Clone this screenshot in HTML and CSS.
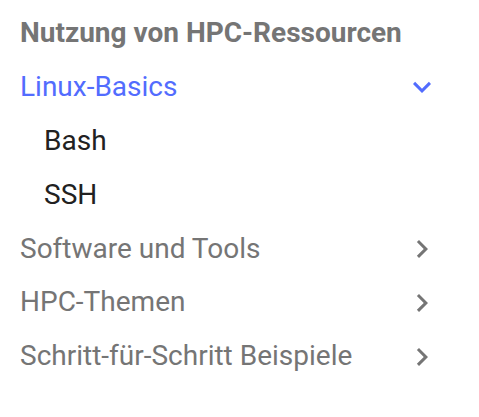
FILE: index.html
```html
<!DOCTYPE html>
<html lang="de">
<head>
<meta charset="utf-8">
<link rel="stylesheet" href="styles.css">
</head>
<body>
<nav class="nav">
  <div class="nav-title">Nutzung von HPC-Ressourcen</div>
  <ul class="nav-list">
    <li class="nav-item">
      <a class="nav-link active">Linux-Basics
        <svg class="icon" viewBox="0 0 24 24"><path d="M7.41 8.58 12 13.17l4.59-4.59L18 10l-6 6-6-6z"/></svg>
      </a>
      <ul class="nav-list nested">
        <li class="nav-item"><a class="nav-link sub">Bash</a></li>
        <li class="nav-item"><a class="nav-link sub">SSH</a></li>
      </ul>
    </li>
    <li class="nav-item">
      <a class="nav-link">Software und Tools
        <svg class="icon" viewBox="0 0 24 24"><path d="M8.59 16.58 13.17 12 8.59 7.41 10 6l6 6-6 6z"/></svg>
      </a>
    </li>
    <li class="nav-item">
      <a class="nav-link">HPC-Themen
        <svg class="icon" viewBox="0 0 24 24"><path d="M8.59 16.58 13.17 12 8.59 7.41 10 6l6 6-6 6z"/></svg>
      </a>
    </li>
    <li class="nav-item">
      <a class="nav-link">Schritt-für-Schritt Beispiele
        <svg class="icon" viewBox="0 0 24 24"><path d="M8.59 16.58 13.17 12 8.59 7.41 10 6l6 6-6 6z"/></svg>
      </a>
    </li>
  </ul>
</nav>
</body>
</html>
```
FILE: styles.css
```css
html, body {
  margin: 0;
  padding: 0;
  background: #fff;
}
body {
  font-family: Roboto, "Noto Sans", sans-serif;
  font-size: 28px;
  line-height: 1.3;
}
.nav {
  padding: 15px 39px 0 20px;
}
.nav-title {
  font-weight: 700;
  color: #757575;
}
.nav-list {
  list-style: none;
  margin: 0;
  padding: 0;
}
.nav-item {
  margin-top: 17.5px;
}
.nested {
  padding-left: 24px;
}
.nav-link {
  display: flex;
  justify-content: space-between;
  align-items: center;
  color: #757575;
}
.nav-link.active {
  color: #526cfe;
}
.nav-link.sub {
  color: #212121;
}
.icon {
  width: 36px;
  height: 36px;
  fill: currentColor;
  flex: none;
}
```
